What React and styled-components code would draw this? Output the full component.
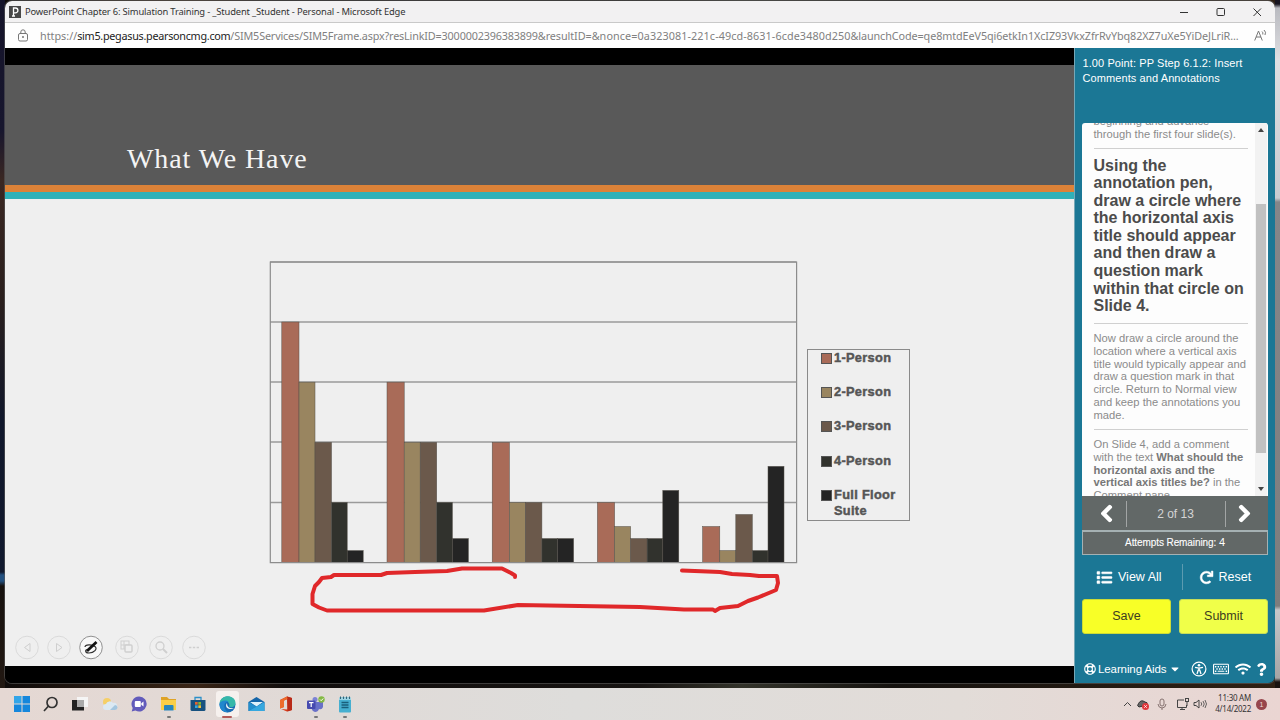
import styled, { createGlobalStyle } from "styled-components";
import {
    FaList, FaRedo, FaChevronLeft, FaChevronRight, FaWifi,
    FaQuestion, FaRegKeyboard, FaRegLifeRing, FaCaretDown
} from "react-icons/fa";

const GlobalStyle = createGlobalStyle`
    * {
        box-sizing: border-box;
    }
    body {
        margin: 0;
        overflow: hidden;
        font-family: "Liberation Sans", Arial, sans-serif;
    }
    svg {
        display: block;
        flex: none;
    }
`;

const Desktop = styled.div`
    width: 1280px;
    height: 720px;
    display: flex;
    flex-direction: column;
    background: #17120f;
`;

const WindowArea = styled.div`
    height: 688px;
    display: grid;
    grid-template-columns: 5px 1270px 5px;
`;

const LeftEdge = styled.div`
    background: linear-gradient(#15142a 0, #17162e 130px, #3a2722 180px, #2a1f1d 300px, #10172b 420px, #11192e 572px, #23507f 575px, #23507f 581px, #17120f 586px, #221812 688px);
`;

const RightEdge = styled.div`
    background: linear-gradient(#181520 0, #181520 4px, #b9bac0 8px, #dedfe2 60px, #c9cbd0 198px, #858689 202px, #7d7d7d 606px, #c6c7c9 610px, #a5a5a5 678px, #19120f 682px);
`;

const WindowColumn = styled.div`
    padding: 1px 0 5px;
    background: linear-gradient(to right, #0f0b0a 0, #3a2516 15%, #120e0d 22%, #171412 50%, #33332a 58%, #15120f 70%, #2f2013 100%);
`;

const BrowserWindow = styled.div`
    height: 682px;
    border-radius: 7px;
    overflow: hidden;
    display: flex;
    flex-direction: column;
    background: #000;
    box-shadow: 0 0 0 1px rgba(90, 90, 90, .6);
`;

const TitleBar = styled.div`
    height: 22px;
    display: flex;
    align-items: center;
    padding-left: 4px;
    background: #f2f1f2;
    border-bottom: 1px solid #c9c9c9;
    font: 9.4px "Noto Sans", sans-serif;
    color: #333;

    .title--text {
        margin-left: 4px;
        letter-spacing: -.16px;
        white-space: pre;
    }
    .title--controls {
        margin-left: auto;
        margin-right: 13px;
    }
`;

const AddressBar = styled.div`
    height: 25px;
    display: flex;
    align-items: center;
    padding: 0 0 1px 13px;
    background: #fefefe;
    font: 10.8px "Noto Sans", sans-serif;
    color: #808080;

    .address--url {
        margin-left: 12px;
        width: 1201px;
        white-space: nowrap;
    }
    .address--aloud {
        margin-left: 13px;
    }
`;

const UrlPart = styled.span`
    letter-spacing: ${props => props.$spacing}px;
    color: ${props => props.$host ? "#222" : "inherit"};
`;

const Content = styled.div`
    flex: 1;
    display: flex;
`;

const Slide = styled.main`
    width: 1069px;
    padding: 17px 0;
    background: #000;
    display: flex;
    flex-direction: column;
`;

const SlideHeader = styled.header`
    height: 120px;
    padding: 78px 0 0 122px;
    background: #595959;
    color: #f4f4f4;
    font: 28px/32px "Liberation Serif", serif;
    letter-spacing: .9px;
    white-space: nowrap;
`;

const Stripe = styled.div`
    height: ${props => props.$height}px;
    background: ${props => props.$color};
`;

const SlideBody = styled.div`
    flex: 1;
    position: relative;
    background: #efefef;
    padding: 61px 0 0 262px;
`;

const ChartRow = styled.div`
    display: flex;
    gap: 7px;
`;

const Legend = styled.ul`
    list-style: none;
    width: 103px;
    height: 172px;
    margin: 89px 0 0 0;
    padding: 0 0 0 14px;
    border: 1px solid #8a8a8a;
    font: bold 12.8px/16px "Liberation Sans", sans-serif;
    color: #555;
    -webkit-text-stroke: .45px #555;
    letter-spacing: .32px;
`;

const LegendItem = styled.li`
    display: flex;
    height: 34.2px;

    &::before {
        content: "";
        flex: none;
        width: 9px;
        height: 9px;
        margin: 4px 3px 0 0;
        outline: .5px solid #555;
        background: ${props => props.$color};
    }
`;

const Ink = styled.svg`
    position: absolute;
    left: 295px;
    top: 361px;
`;

const ShowControls = styled.div`
    position: absolute;
    left: 10px;
    bottom: 5px;
    display: flex;
`;

const Sidebar = styled.aside`
    width: 201px;
    padding: 8px 7px 0 7px;
    background: #1b7795;
    border-left: 1px solid #76a8b7;
    color: #fff;

    h1 {
        margin: 0;
        height: 67px;
        padding-left: .5px;
        font-size: 11px;
        font-weight: 400;
        line-height: 14.8px;
        letter-spacing: .09px;
        white-space: nowrap;
    }
`;

const TaskBox = styled.section`
    width: 186px;
    height: 373px;
    display: flex;
    overflow: hidden;
    border-radius: 3px 3px 0 0;
    background: #fdfdfd;
`;

const TaskText = styled.div`
    width: 173px;
    height: 373px;
    padding: 0 7px 0 11.5px;
    overflow: hidden;
    color: #8b8b8b;
    font-size: 11.2px;
    line-height: 12.8px;
    white-space: nowrap;

    p {
        margin: 0;
        border-bottom: 1px solid #d0d0d0;
    }
    b {
        color: #777;
    }
`;

const Previous = styled.p`
    height: 33.5px;
    margin-top: -8px !important;
    width: 154px;
`;

const Current = styled.p`
    height: 175px;
    width: 154px;
    padding-top: 8px;
    font-size: 16px;
    font-weight: bold;
    line-height: 17.6px;
    color: #4b4b4b;
`;

const Upcoming = styled.p`
    height: 106px;
    width: 154px;
    padding-top: 8.5px;
`;

const ScrollBar = styled.div`
    width: 12px;
    height: 373px;
    display: flex;
    flex-direction: column;
    align-items: center;
    justify-content: space-between;
    padding: 5px 0;
    background: #f2f2f2;

    .scroll--thumb {
        width: 10px;
        height: 249px;
        margin-top: 38px;
        background: #c1c1c1;
    }
`;

const Pager = styled.div`
    width: 186px;
    height: 34px;
    display: flex;
    align-items: center;
    justify-content: space-between;
    padding: 1px 14px 0 15px;
    background: #626867;
    color: #d5d5d5;
    font-size: 12px;

    .pager--count {
        width: 100px;
        height: 26px;
        line-height: 27px;
        text-align: center;
        border: solid #a2a5a5;
        border-width: 0 1px;
    }
    svg {
        color: #fff;
        stroke: #fff;
        stroke-width: 36px;
        overflow: visible;
    }
`;

const Attempts = styled.div`
    width: 186px;
    height: 25px;
    border: 1px solid #a5b1b3;
    border-top-width: 2px;
    background: #626867;
    font-size: 10px;
    letter-spacing: -.09px;
    line-height: 21px;
    text-align: center;
    -webkit-text-stroke: .1px #fff;

    span {
        font-size: 11px;
        -webkit-text-stroke: 0;
    }
`;

const Links = styled.div`
    display: flex;
    align-items: center;
    height: 26px;
    margin-top: 9px;
    padding-left: 15px;
    font-size: 12.5px;

    span {
        margin-left: 6px;
    }
    .links--divider {
        width: 1px;
        height: 26px;
        margin: 0 17px 0 20px;
        background: #5c9bb0;
    }
    svg {
        stroke: #fff;
        stroke-width: 18px;
        overflow: visible;
    }
`;

const Buttons = styled.div`
    display: flex;
    gap: 8px;
    margin-top: 9px;
`;

const ActionButton = styled.button`
    width: 89px;
    height: 35px;
    padding: 0 0 1px;
    border: 1px solid ${props => props.$border};
    border-radius: 3px;
    background: ${props => props.$color};
    color: #3c3c20;
    font: 12.5px "Liberation Sans", sans-serif;
`;

const Tools = styled.div`
    display: flex;
    align-items: center;
    height: 20px;
    margin-top: 25px;
    padding-left: 2px;
    font-size: 11.5px;
    letter-spacing: -.1px;

    .tools--label {
        width: 69px;
        margin: 0 2px 0 2px;
        white-space: nowrap;
    }
    .tools--icons {
        display: flex;
        align-items: center;
        gap: 6px;
        margin-left: 10px;
    }
    .tools--icons svg:last-child {
        margin-left: -2px;
    }
`;

const TaskBar = styled.footer`
    height: 32px;
    display: flex;
    justify-content: space-between;
    background: linear-gradient(to right, #e5d8d3 0, #e0dad7 25%, #dedddb 45%, #e2dcd8 75%, #ead5d2 100%);
`;

const AppStrip = styled.div`
    display: flex;
    align-items: center;
    padding-left: 7px;
`;

const AppSlot = styled.div`
    width: 29.4px;
    height: 32px;
    display: flex;
    flex-direction: column;
    align-items: center;
    justify-content: space-between;
    padding: 8px 0 1px;

    .app--tile {
        display: flex;
        align-items: center;
        justify-content: center;
        width: 23px;
        height: 26px;
        margin: -5px 0;
        border-radius: 3px;
        background: ${props => props.$active ? "#f6f1ee" : "none"};
    }
    .app--mark {
        width: ${props => props.$active ? 10 : 4}px;
        height: 2px;
        margin-bottom: 1px;
        border-radius: 1px;
        background: ${props => props.$active ? "#b35a58" : props.$running ? "#777" : "none"};
        z-index: 1;
    }
`;

const Tray = styled.div`
    display: flex;
    align-items: center;
    padding-right: 13px;

    .tray--clock {
        width: 38px;
        margin: 0 5px 0 3px;
        font: 8px/10.6px "Noto Sans", sans-serif;
        letter-spacing: -.25px;
        text-align: right;
        color: #333;
        white-space: nowrap;
    }
    .tray--badge {
        width: 11px;
        height: 11px;
        border-radius: 50%;
        background: #97464c;
        color: #f0dcdc;
        font-size: 7px;
        line-height: 11px;
        text-align: center;
    }
`;

const series = [
    { name: "1-Person", color: "#a96b58" },
    { name: "2-Person", color: "#998560" },
    { name: "3-Person", color: "#6b594b" },
    { name: "4-Person", color: "#31322d" },
    { name: "Full Floor Suite", color: "#242424" },
];

const groups = [
    [20, 15, 10, 5, 1],
    [15, 10, 10, 5, 2],
    [10, 5, 5, 2, 2],
    [5, 3, 2, 2, 6],
    [3, 1, 4, 1, 8],
];

const barEdges = [14.8, 32, 48, 64.5, 80.2, 96.2];

const Chart = () => (
    <svg width="533" height="304" viewBox="0 0 533 304">
        {[2, 62, 122, 182, 242.5].map(y => (
            <line key={y} x1="3" x2="529.5" y1={y} y2={y} stroke="#9a9a9a" strokeWidth="1.3" />
        ))}
        {groups.map((group, g) => group.map((value, i) => (
            <rect
                key={g + "-" + i}
                x={barEdges[i] + g * 105.2}
                y={302.6 - value * 12.03}
                width={barEdges[i + 1] - barEdges[i]}
                height={value * 12.03}
                fill={series[i].color}
                stroke="#55504a"
                strokeWidth=".5"
            />
        )))}
        <path d="M3.3 302.7V2H529.6V302.7Z" fill="none" stroke="#8c8c8c" strokeWidth="1.2" />
    </svg>
);

const Annotation = () => (
    <Ink width="500" height="60" viewBox="300 560 500 60" fill="none" stroke="#e0282a" strokeWidth="4" strokeLinecap="round" strokeLinejoin="round">
        <path d="M515 577V575.500L511 573L502 568.500H462L447 571L415 572L387 573L381 575H334L331 577L322 578L319 582L315 586L312.500 594V604L319 607.500L327 610.500H484L518 605L640 607L684 609.500H713L715 611L720 608L738 606L748 601L758 597.500L776 590L778 583L777 576H759L750 575L732 574L720 572L682 570.500" />
    </Ink>
);

const controls = [
    { width: 32, d: <path d="M20 12.5V20.5L14.5 16.5Z" /> },
    { width: 32, d: <path d="M14.5 12.5V20.5L20 16.5Z" /> },
    { width: 36, active: true },
    { width: 34, d: <><rect x="11" y="10" width="8" height="8" /><path d="M14 10V18M11 14H19" /><rect x="15" y="14" width="7" height="7" rx="1" fill="#efefef" strokeWidth="1.4" /></> },
    { width: 33, d: <><circle cx="16" cy="15" r="4" strokeWidth="1.3" /><path d="M19 18L23 22" strokeWidth="2" /></> },
    { width: 34, d: <path d="M12 16.5H22" strokeDasharray="2.4 1.4" strokeWidth="1.4" /> },
];

const SlideShowControls = () => (
    <ShowControls>
        {controls.map((item, i) => (
            <svg key={i} width={item.width} height="26" viewBox={"5 4 " + item.width + " 26"} fill="none" stroke="#cfcfcf">
                <circle cx="17" cy="16.5" r="11.3" fill={item.active ? "#f8f8f8" : "none"} stroke={item.active ? "#909090" : "#dadada"} />
                {item.active ? (
                    <>
                        <path d="M11 16C11 13.500 18 13 21 15.500C24 18 20 22 15 22C11 22 10.500 18.500 14 18.500" stroke="#333" strokeWidth="1.2" />
                        <path d="M13 20L22.500 11" stroke="#111" strokeWidth="2.8" />
                    </>
                ) : item.d}
            </svg>
        ))}
    </ShowControls>
);

const AccessIcon = () => (
    <svg width="16" height="16" viewBox="0 0 16 16" fill="none" stroke="#fff">
        <circle cx="8" cy="8" r="6.9" strokeWidth="1.2" />
        <circle cx="8" cy="4.300" r="1.300" fill="#fff" stroke="none" />
        <path d="M4 6.300L8 7.100L12 6.300M8 7V9.500M6 13L7.300 9H8.700L10 13" strokeWidth="1.300" strokeLinejoin="round" />
    </svg>
);

const StartIcon = () => (
    <svg width="16" height="16" viewBox="0 0 16 16" fill="#1587dc">
        <path d="M0 0H7.5V7.5H0Z" fill="#32a5e8" />
        <path d="M8.5 0H16V7.5H8.5ZM0 8.5H7.5V16H0ZM8.5 8.5H16V16H8.5Z" />
    </svg>
);

const SearchIcon = () => (
    <svg width="16" height="16" viewBox="0 0 16 16" fill="none" stroke="#333" strokeWidth="1.7">
        <circle cx="9" cy="6.5" r="5" />
        <path d="M5.5 10L1 15" />
    </svg>
);

const TaskViewIcon = () => (
    <svg width="16" height="16" viewBox="0 0 16 16">
        <rect x="5" y="1" width="11" height="10" fill="#f5f5f5" />
        <path d="M0 4H5V11H12V14.5H0Z" fill="#222" />
        <path d="M5 4H12V11H5Z" fill="#aaa" />
    </svg>
);

const WeatherIcon = () => (
    <svg width="16" height="16" viewBox="0 0 16 16">
        <circle cx="5" cy="6" r="4" fill="#f5cf68" />
        <path d="M4 14a3 3 0 0 1 0-6a4 4 0 0 1 7-1a3.500 3.500 0 0 1 1.500 7z" fill="#dce9f3" />
        <path d="M8 14L13 9a2.500 2.500 0 0 1 0 5z" fill="#a4c6df" />
    </svg>
);

const ChatIcon = () => (
    <svg width="16" height="16" viewBox="0 0 16 16">
        <path d="M8 .5a7.500 7.500 0 1 1-3.600 14L.7 15.500L1.700 12A7.500 7.500 0 0 1 8 .5" fill="#625bbb" />
        <rect x="3.800" y="5" width="6" height="6" rx="1" fill="#fff" />
        <path d="M10.300 7.200L12.500 5.500V10.500L10.300 8.800Z" fill="#fff" />
    </svg>
);

const FolderIcon = () => (
    <svg width="17" height="16" viewBox="0 0 17 16">
        <path d="M1 1H7L9 3H16V14H1Z" fill="#dfa326" />
        <path d="M1 4H16V14H1Z" fill="#f9cf46" />
        <path d="M4 10Q4 9 5 9H12.500Q13.500 9 13.500 10V14.500H4Z" fill="#2686bd" />
    </svg>
);

const StoreIcon = () => (
    <svg width="16" height="16" viewBox="0 0 16 16">
        <path d="M5 4V1.500H11V4" fill="none" stroke="#2b90c9" strokeWidth="1.3" />
        <path d="M.5 4H15.500V13.500Q15.500 15 14 15H2Q.5 15 .5 13.500Z" fill="#17517f" />
        <path d="M5 6H7.700V8.700H5Z" fill="#e26332" />
        <path d="M8.300 6H11V8.700H8.300Z" fill="#81b530" />
        <path d="M5 9.300H7.700V12H5Z" fill="#32a8dc" />
        <path d="M8.300 9.300H11V12H8.300Z" fill="#f0bf35" />
    </svg>
);

const EdgeIcon = () => (
    <svg width="17" height="17" viewBox="0 0 17 17">
        <circle cx="8.500" cy="8.500" r="8" fill="#176bb4" />
        <path d="M.5 8C1 -2 16 -2 16.500 7C16.500 11 12 12 10 10.500C11 9 10 5 6 5C3 5 1 7 .5 8" fill="#36b8a9" />
        <path d="M.5 8C1 5 7 3 9.500 6C5 5 3 12 9 16.300C3 16.500 .3 12 .5 8" fill="#2187cd" />
        <path d="M8 7C5 11 10 15 15 12C13 12 8 13 8 7" fill="#eef6f5" />
    </svg>
);

const MailIcon = () => (
    <svg width="17" height="15" viewBox="0 0 17 15">
        <path d="M.5 5L8.500 0L16.500 5V14H.5Z" fill="#1565a8" />
        <path d="M2 5H15L8.500 9.500Z" fill="#dff2fb" />
        <path d="M.5 5L8.500 9.500L.5 14Z" fill="#248fcd" />
        <path d="M16.500 5V14H.5Z" fill="#36a8df" />
    </svg>
);

const OfficeIcon = () => (
    <svg width="14" height="16" viewBox="0 0 14 16">
        <path d="M1 4L8 .5L13 2V14L8 15.500L2 13L8.500 13.500V3L5 4.500V11L1 12.500Z" fill="#d83b18" />
        <path d="M8 .5L13 2V14L8.500 15.500Z" fill="#b92a18" />
        <path d="M1 4L8 .5L8.500 3L5 4.500V11L1 12.500Z" fill="#ed6b2c" />
    </svg>
);

const TeamsIcon = () => (
    <svg width="19" height="17" viewBox="0 0 19 17">
        <circle cx="9" cy="3.500" r="2.500" fill="#7b83d6" />
        <path d="M6 6H17V11Q16 14 13 13Q12 16 9 16Q5 15 6 11Z" fill="#6870c8" />
        <rect x="1" y="4.500" width="8.500" height="8.500" rx="1" fill="#464ab0" />
        <path d="M3 6.700H7.500M5.200 6.700V11" stroke="#fff" strokeWidth="1.200" />
        <circle cx="15.500" cy="3.500" r="3.200" fill="#83b943" />
        <path d="M14 3.500L15.200 4.700L17.200 2.500" stroke="#fff" fill="none" />
    </svg>
);

const NotepadIcon = () => (
    <svg width="14" height="17" viewBox="0 0 14 17">
        <rect x="1" y="1.500" width="12" height="15" rx="1" fill="#46afd0" />
        <path d="M1 2H13V4H1Z" fill="#9bd4e4" />
        <path d="M2.500 .5V3M5.500 .5V3M8.500 .5V3M11.500 .5V3" stroke="#33667a" />
        <path d="M3.500 6.500H10.500M3.500 9H10.500M3.500 11.500H10.500" stroke="#195f7b" strokeWidth="1.300" />
    </svg>
);

const apps = [
    { icon: <StartIcon /> },
    { icon: <SearchIcon /> },
    { icon: <TaskViewIcon /> },
    { icon: <WeatherIcon /> },
    { icon: <ChatIcon /> },
    { icon: <FolderIcon />, running: true },
    { icon: <StoreIcon /> },
    { icon: <EdgeIcon />, active: true },
    { icon: <MailIcon /> },
    { icon: <OfficeIcon /> },
    { icon: <TeamsIcon />, running: true },
    { icon: <NotepadIcon />, running: true },
];

const TrayIcons = () => (
    <svg width="88" height="16" viewBox="0 0 88 16" fill="none" stroke="#444">
        <path d="M2 10L5.500 6.500L9 10" />
        <path d="M17 11Q14.500 10 16.500 7.500Q19 3 23 6Q26 6 25 9Z" fill="#666" stroke="#333" />
        <circle cx="23.500" cy="10.500" r="3.500" fill="#df383c" stroke="none" />
        <path d="M22.200 9.200L24.800 11.800M24.800 9.200L22.200 11.800" stroke="#fff" strokeWidth=".8" />
        <g stroke="#85716f">
            <rect x="38" y="3" width="4" height="7" rx="2" />
            <path d="M36 8Q36.500 12 40 12T44 8M40 12V14" />
        </g>
        <path d="M62 4H55.500V11.500H64.500V9M58 13.500H63M60 11.500V13.500" />
        <rect x="63.500" y="2.500" width="3" height="3" />
        <path d="M65 5.500V10H64" />
        <path d="M72 6.500H74L77 4V12L74 9.500H72Z" />
        <path d="M79 6.200Q80.500 8 79 9.800M81 5Q83.500 8 81 11M83 4Q86 8 83 12" strokeWidth=".8" />
    </svg>
);

const App = () => {
    return (
        <>
            <GlobalStyle />
            <Desktop>
                <WindowArea>
                    <LeftEdge />
                    <WindowColumn>
                        <BrowserWindow>
                            <TitleBar>
                                <svg width="12" height="12" viewBox="0 0 12 12">
                                    <rect width="12" height="12" fill="#484848" />
                                    <path d="M4.500 10.500V2H6.500A2.300 2.300 0 0 1 6.500 6.800H4.500M3 10H6" fill="none" stroke="#fff" strokeWidth="1.300" />
                                </svg>
                                <span className="title--text">PowerPoint Chapter 6: Simulation Training - _Student _Student - Personal - Microsoft Edge</span>
                                <svg className="title--controls" width="82" height="10" viewBox="0 0 82 10" fill="none" stroke="#333">
                                    <path d="M0 5.500H8" />
                                    <rect x="37" y="1.500" width="7.500" height="7" rx="1" />
                                    <path d="M73.500 1.500L81 9M81 1.500L73.500 9" />
                                </svg>
                            </TitleBar>
                            <AddressBar>
                                <svg width="10" height="13" viewBox="0 0 10 13" fill="none" stroke="#777">
                                    <rect x=".5" y="4.500" width="9" height="7.500" rx="1.500" />
                                    <path d="M2.800 4.500V3A2.200 2.200 0 0 1 7.200 3V4.500" />
                                    <circle cx="5" cy="8" r=".6" fill="#777" />
                                </svg>
                                <span className="address--url">
                                    <UrlPart $spacing={0}>https://</UrlPart>
                                    <UrlPart $spacing={-.28} $host>sim5.pegasus.pearsoncmg.com</UrlPart>
                                    <UrlPart $spacing={-.16}>/SIM5Services/SIM5Frame.aspx?resLinkID=3000002396383899</UrlPart>
                                    <UrlPart $spacing={-.07}>&amp;resultID=</UrlPart>
                                    <UrlPart $spacing={.09}>&amp;nonce=0a323081-221c-49cd-8631-6cde3480d250</UrlPart>
                                    <UrlPart $spacing={-.09}>&amp;launchCode=qe8mtdEeV5qi6etkIn1XcIZ93VkxZfrRvYbq82XZ7uXe5YiDeJLriR...</UrlPart>
                                </span>
                                <svg className="address--aloud" width="14" height="13" viewBox="0 0 14 13" fill="none" stroke="#777">
                                    <path d="M.7 11.500L4.500 2L8.300 11.500M2 8H7M8 2.500Q9.300 3.500 8.800 5.500M10 1Q12.500 3 11 6" />
                                </svg>
                            </AddressBar>
                            <Content>
                                <Slide>
                                    <SlideHeader>What We Have</SlideHeader>
                                    <Stripe $height={7} $color="#dc8238" />
                                    <Stripe $height={7} $color="#2fb1b8" />
                                    <SlideBody>
                                        <ChartRow>
                                            <Chart />
                                            <Legend>
                                                {series.map(item => (
                                                    <LegendItem key={item.name} $color={item.color}>{item.name}</LegendItem>
                                                ))}
                                            </Legend>
                                        </ChartRow>
                                        <Annotation />
                                        <SlideShowControls />
                                    </SlideBody>
                                </Slide>
                                <Sidebar>
                                    <h1>1.00 Point: PP Step 6.1.2: Insert<br />Comments and Annotations</h1>
                                    <TaskBox>
                                        <TaskText>
                                            <Previous>beginning and advance<br />through the first four slide(s).</Previous>
                                            <Current>
                                                Using the<br />annotation pen,<br />draw a circle where<br />the horizontal axis<br />title should appear<br />and then draw a<br />question mark<br />within that circle on<br />Slide 4.
                                            </Current>
                                            <Upcoming>
                                                Now draw a circle around the<br />location where a vertical axis<br />title would typically appear and<br />draw a question mark in that<br />circle. Return to Normal view<br />and keep the annotations you<br />made.
                                            </Upcoming>
                                            <Upcoming>
                                                On Slide 4, add a comment<br />with the text <b>What should the<br />horizontal axis and the<br />vertical axis titles be?</b> in the<br />Comment pane.
                                            </Upcoming>
                                        </TaskText>
                                        <ScrollBar>
                                            <svg width="6" height="4" viewBox="0 0 6 4"><path d="M0 4L3 0L6 4Z" fill="#444" /></svg>
                                            <div className="scroll--thumb" />
                                            <svg width="6" height="4" viewBox="0 0 6 4"><path d="M0 0L3 4L6 0Z" fill="#444" /></svg>
                                        </ScrollBar>
                                    </TaskBox>
                                    <Pager>
                                        <FaChevronLeft size={19} />
                                        <div className="pager--count">2 of 13</div>
                                        <FaChevronRight size={19} />
                                    </Pager>
                                    <Attempts>Attempts Remaining: <span>4</span></Attempts>
                                    <Links>
                                        <FaList size={15} />
                                        <span>View All</span>
                                        <div className="links--divider" />
                                        <FaRedo size={13} />
                                        <span>Reset</span>
                                    </Links>
                                    <Buttons>
                                        <ActionButton $color="#f8ff27" $border="#ccdb37">Save</ActionButton>
                                        <ActionButton $color="#f0ff49" $border="#c5dc5a">Submit</ActionButton>
                                    </Buttons>
                                    <Tools>
                                        <FaRegLifeRing size={12} />
                                        <span className="tools--label">Learning Aids</span>
                                        <FaCaretDown size={12} />
                                        <div className="tools--icons">
                                            <AccessIcon />
                                            <FaRegKeyboard size={16} />
                                            <FaWifi size={16} />
                                            <FaQuestion size={13} />
                                        </div>
                                    </Tools>
                                </Sidebar>
                            </Content>
                        </BrowserWindow>
                    </WindowColumn>
                    <RightEdge />
                </WindowArea>
                <TaskBar>
                    <AppStrip>
                        {apps.map((app, i) => (
                            <AppSlot key={i} $active={app.active} $running={app.running}>
                                <div className="app--tile">{app.icon}</div>
                                <div className="app--mark" />
                            </AppSlot>
                        ))}
                    </AppStrip>
                    <Tray>
                        <TrayIcons />
                        <div className="tray--clock">11:30 AM<br />4/14/2022</div>
                        <div className="tray--badge">1</div>
                    </Tray>
                </TaskBar>
            </Desktop>
        </>
    );
};

export default App;
